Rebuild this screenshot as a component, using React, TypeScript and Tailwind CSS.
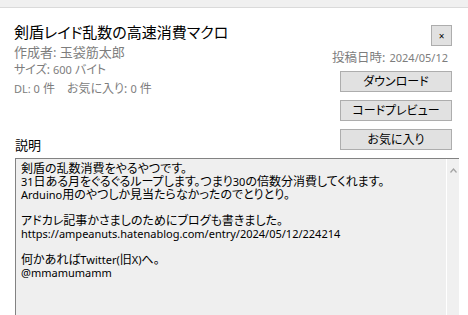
import React from "react";

const font = "font-['Noto_Sans','Noto_Sans_CJK_JP',sans-serif] [font-feature-settings:'palt']";

function Btn({ children, className = "" }: { children: React.ReactNode; className?: string }) {
  return (
    <button
      className={`flex items-center justify-center bg-[#e1e1e1] border border-[#adadad] text-black ${className}`}
    >
      {children}
    </button>
  );
}

function Mixed({ text }: { text: string }) {
  const parts = text.split(/([\x20-\x7e]+)/).filter((p) => p.length > 0);
  return (
    <>
      {parts.map((p, i) =>
        /^[\x20-\x7e]+$/.test(p) ? (
          <span key={i} className="text-[11px]">
            {p}
          </span>
        ) : (
          <span key={i}>{p}</span>
        )
      )}
    </>
  );
}

export default function App() {
  const lines: string[] = [
    "剣盾の乱数消費をやるやつです。",
    "31日ある月をぐるぐるループします。つまり30の倍数分消費してくれます。",
    "Arduino用のやつしか見当たらなかったのでとりとり。",
    "",
    "アドカレ記事かさましのためにブログも書きました。",
    "https://ampeanuts.hatenablog.com/entry/2024/05/12/224214",
    "",
    "何かあればTwitter(旧X)へ。",
    "@mmamumamm",
  ];
  return (
    <div className={`w-[468px] h-[315px] bg-white overflow-hidden flex flex-col ${font}`}>
      <div className="h-[8px] shrink-0 bg-[#f0f0f0] border-b border-[#dadada]" />
      <div className="flex justify-between pl-[14px] pr-[16px] pt-[14px]">
        <div className="flex flex-col">
          <div className="text-[15px] leading-[20px] text-black">剣盾レイド乱数の高速消費マクロ</div>
          <div className="mt-[2px] text-[13px] leading-[16px] text-[#7d7d7d]">作成者: 玉袋筋太郎</div>
          <div className="mt-[2px] text-[12px] leading-[16px] text-[#7d7d7d]">
            サイズ: <span className="text-[11px]">600</span> バイト
          </div>
          <div className="mt-[3px] text-[12px] leading-[16px] text-[#7d7d7d]">
            <span className="text-[11px]">DL: 0</span> 件　お気に入り: <span className="text-[11px]">0</span> 件
          </div>
          <div className="mt-[40px] ml-[1px] text-[13px] leading-[16px] text-black">説明</div>
        </div>
        <div className="flex flex-col items-end">
          <Btn className="w-[21px] h-[21px] mt-[3px] text-[10px] leading-none">×</Btn>
          <div className="mt-[4px] h-[16px] flex items-baseline text-[#7d7d7d] leading-[16px] mr-[4px]">
            <span className="text-[12.5px]">投稿日時:</span>
            <span className="text-[11px] ml-[4px]">2024/05/12</span>
          </div>
          <div className="mt-[5px] flex flex-col gap-[8px]">
            <Btn className="w-[112px] h-[21px] text-[12px]">ダウンロード</Btn>
            <Btn className="w-[112px] h-[21px] text-[12px]">コードプレビュー</Btn>
            <Btn className="w-[112px] h-[21px] text-[12px]">お気に入り</Btn>
          </div>
        </div>
      </div>
      <div className="mt-[5px] ml-[15px] w-[444px] flex-1 flex border-t border-l border-[#828282]">
        <div className="flex-1 bg-[#efefef] pl-[5px] pt-[3px] text-[12px] leading-[13px] text-black">
          {lines.map((l, i) => (
            <div key={i} className="h-[13px] whitespace-nowrap">
              <Mixed text={l} />
            </div>
          ))}
        </div>
        <div className="w-[12px] ml-[1px] bg-[#f0f0f0] flex justify-center pt-[9px]">
          <svg width="7" height="5" viewBox="0 0 7 5">
            <path d="M0.5 4.5 L3.5 1 L6.5 4.5" fill="none" stroke="#a3a3a3" strokeWidth="1.2" />
          </svg>
        </div>
      </div>
    </div>
  );
}
